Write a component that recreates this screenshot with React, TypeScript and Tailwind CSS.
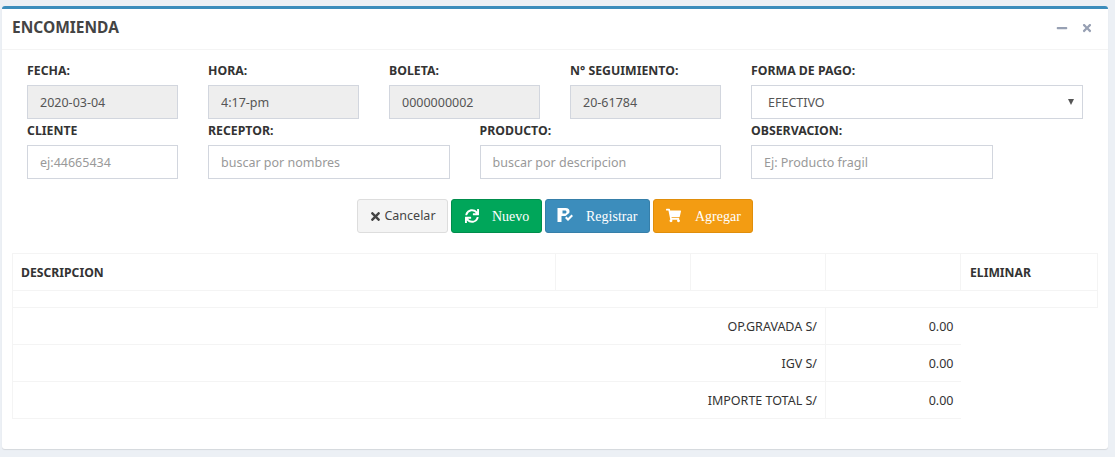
import { FaMinus, FaTimes, FaSync, FaShoppingCart } from 'react-icons/fa'

function Field({ label, span, value, placeholder, readOnly }: { label: string; span: string; value?: string; placeholder?: string; readOnly?: boolean }) {
  return (
    <div className={`${span} px-[15px]`}>
      <label className="block h-[19px] font-bold text-[12.3px] leading-[19px] mb-[5px] text-[#333]">{label}</label>
      <input
        readOnly
        value={value}
        placeholder={placeholder}
        className={`block h-[34px] w-full border border-[#d2d6de] px-3 text-[12.5px] text-[#555] placeholder:text-[#999] outline-none ${readOnly ? 'bg-[#eee]' : 'bg-white'}`}
      />
    </div>
  )
}

export default function App() {
  return (
    <div className="min-h-[457px] bg-[#ecf0f5] px-[2px] pt-[6px] font-['Noto_Sans',sans-serif] text-[12.5px] text-[#333]">
      <div className="h-[443px] w-[1106px] rounded-[3px] border-t-[3px] border-[#3c8dbc] bg-white shadow-[0_1px_1px_rgba(0,0,0,0.1)]">
        {/* Header */}
        <div className="flex h-[41px] items-center justify-between border-b border-[#f4f4f4] pb-[2px] pl-[10px] pr-[15px]">
          <h3 className="text-[15.5px] font-bold text-[#444]">ENCOMIENDA</h3>
          <div className="flex items-center gap-[13px] text-[#97a0b3]">
            <FaMinus size={12} />
            <FaTimes size={12} />
          </div>
        </div>

        <div className="px-[10px]">
          {/* Form */}
          <div className="grid grid-cols-12 pt-[11px]">
            <Field span="col-span-2" label="FECHA:" value="2020-03-04" readOnly />
            <Field span="col-span-2" label="HORA:" value="4:17-pm" readOnly />
            <Field span="col-span-2" label="BOLETA:" value="0000000002" readOnly />
            <Field span="col-span-2" label="N° SEGUIMIENTO:" value="20-61784" readOnly />
            <div className="col-span-4 px-[15px]">
              <label className="block h-[19px] font-bold text-[12.3px] leading-[19px] mb-[5px]">FORMA DE PAGO:</label>
              <div className="relative flex h-[34px] items-center border border-[#d2d6de] pl-[16px] pt-[2px] text-[#555]">
                EFECTIVO
                <span className="absolute right-[8px] top-[13px] h-0 w-0 border-x-[3px] border-t-[6px] border-x-transparent border-t-[#555]" />
              </div>
            </div>
            <div className="col-span-2 mt-[2px] px-[15px]">
              <label className="block h-[19px] font-bold text-[12.3px] leading-[19px] mb-[5px]">CLIENTE</label>
              <input readOnly placeholder="ej:44665434" className="block h-[34px] w-full border border-[#d2d6de] px-3 placeholder:text-[#999] outline-none" />
            </div>
            <div className="col-span-3 mt-[2px] grid">
              <Field span="" label="RECEPTOR:" placeholder="buscar por nombres" />
            </div>
            <div className="col-span-3 mt-[2px] grid">
              <Field span="" label="PRODUCTO:" placeholder="buscar por descripcion" />
            </div>
            <div className="col-span-3 mt-[2px] grid">
              <Field span="" label="OBSERVACION:" placeholder="Ej: Producto fragil" />
            </div>
          </div>

          {/* Buttons */}
          <div className="mt-[20px] flex h-[34px] justify-center gap-[3px]">
            <button className="flex w-[91px] items-center justify-center gap-[2px] rounded-[3px] border border-[#ddd] bg-[#f4f4f4] text-[#444]">
              <FaTimes size={13} />
              Cancelar
            </button>
            <button className="flex w-[91px] items-center gap-[13px] rounded-[3px] border border-[#008d4c] bg-[#00a65a] pl-[13px] font-['Liberation_Serif',serif] text-[14px] text-white">
              <FaSync size={14} className="-mt-[1px]" />
              <span className="pt-[1px]">Nuevo</span>
            </button>
            <button className="flex w-[105px] items-center gap-[12px] rounded-[3px] border border-[#367fa9] bg-[#3c8dbc] pl-[11px] font-['Liberation_Serif',serif] text-[14px] text-white">
              <svg width="17" height="15" viewBox="0 0 16 15" fill="white" className="-mt-[2px]">
                <path fillRule="evenodd" d="M0 0h8c3 0 4 1.500 4 3.500 0 .6-.1 1.100-.3 1.500L8 8H4v6H0zM5 2.500V5.500h2.500c1 0 1.500-.7 1.500-1.500S8.500 2.500 7.500 2.500z" />
                <path d="M7.500 10 9 8.500l1.500 1.500L14 6.500l1.500 1.500-5 5z" />
              </svg>
              <span className="pt-[1px]">Registrar</span>
            </button>
            <button className="flex w-[100px] items-center gap-[14px] rounded-[3px] border border-[#e08e0b] bg-[#f39c12] pl-[12px] font-['Liberation_Serif',serif] text-[14px] text-white">
              <FaShoppingCart size={15} className="-mt-[2px]" />
              <span className="pt-[1px]">Agregar</span>
            </button>
          </div>

          {/* Table */}
          <table className="mt-[20px] w-[1085px] table-fixed border-collapse text-[12.5px]">
            <colgroup>
              <col className="w-[543px]" />
              <col className="w-[135px]" />
              <col className="w-[135px]" />
              <col className="w-[135px]" />
              <col className="w-[137px]" />
            </colgroup>
            <thead>
              <tr className="h-[37px] text-[12.2px] font-bold">
                <th className="border border-[#f4f4f4] px-2 pt-[3px] text-left">DESCRIPCION</th>
                <th className="border border-[#f4f4f4]" />
                <th className="border border-[#f4f4f4]" />
                <th className="border border-[#f4f4f4]" />
                <th className="border border-[#f4f4f4] pl-[9px] pt-[3px] text-left">ELIMINAR</th>
              </tr>
            </thead>
            <tbody>
              <tr className="h-[17px]">
                <td colSpan={5} className="border border-[#f4f4f4]" />
              </tr>
              {['OP.GRAVADA S/', 'IGV S/', 'IMPORTE TOTAL S/'].map((label) => (
                <tr key={label} className="h-[37px]">
                  <td colSpan={3} className="border border-[#f4f4f4] px-2 pt-[3px] text-right">{label}</td>
                  <td className="border-y border-l border-[#f4f4f4] pr-[7px] pt-[3px] text-right">0.00</td>
                </tr>
              ))}
            </tbody>
          </table>
        </div>
      </div>
    </div>
  )
}
